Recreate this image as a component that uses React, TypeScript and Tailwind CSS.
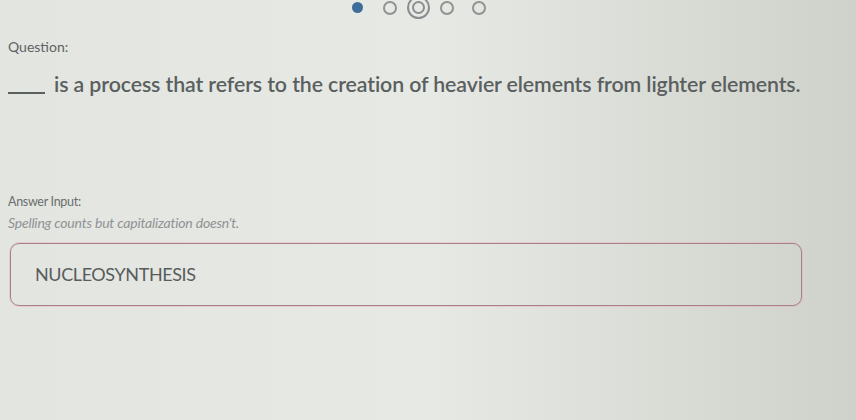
import React from "react"

function Dot({ kind, className = "" }: { kind: "done" | "open" | "current"; className?: string }) {
  if (kind === "done") return <span className={`block h-[11px] w-[11px] rounded-full bg-[#3f6d9a] ${className}`} />
  if (kind === "current")
    return (
      <span className={`flex h-[23px] w-[23px] items-center justify-center rounded-full border-2 border-[#8a8e8f] ${className}`}>
        <span className="block h-[13px] w-[13px] rounded-full border-2 border-[#8a8e8f]" />
      </span>
    )
  return <span className={`block h-[14px] w-[14px] rounded-full border-2 border-[#8f9394] ${className}`} />
}

export default function App() {
  return (
    <div
      className="relative h-[420px] w-[856px] overflow-hidden bg-gradient-to-r from-[#e3e5e1] via-[#e7e9e5] to-[#cfd2ca] text-[#5b6060]"
      style={{ fontFamily: "Lato, 'Noto Sans', sans-serif" }}
    >
      {/* progress dots */}
      <div className="-mt-[4px] flex items-center pl-[352px]">
        <Dot kind="done" />
        <Dot kind="open" className="ml-[20px]" />
        <Dot kind="current" className="ml-[10px]" />
        <Dot kind="open" className="ml-[10px]" />
        <Dot kind="open" className="ml-[18px]" />
      </div>

      <div className="px-[8px]">
        <p className="mt-[17px] text-[14px] text-[#5e6262]">Question:</p>
        <p className="mt-[12px] flex items-end text-[21.3px] font-semibold tracking-[-0.1px] text-[#5a5f5f]">
          <span className="mb-[7px] mr-[9px] block h-[1.5px] w-[37px] bg-[#5a5f5f]" />
          <span>is a process that refers to the creation of heavier elements from lighter elements.</span>
        </p>

        <p className="mt-[92px] text-[12.5px] tracking-[-0.3px] text-[#6a6e6e]">Answer Input:</p>
        <p className="mt-0 text-[14px] italic tracking-[-0.2px] text-[#8f9393]">
          Spelling counts but capitalization doesn't.
        </p>

        <div className="ml-[2px] mt-[10px] flex h-[63px] w-[792px] items-center rounded-[9px] border-[1.5px] border-[#a8808a] px-[24px] shadow-[0_0_0_1px_rgba(230,170,180,0.4)]">
          <span className="text-[18px] tracking-[-0.4px] text-[#585c5c]">NUCLEOSYNTHESIS</span>
        </div>
      </div>
    </div>
  )
}
